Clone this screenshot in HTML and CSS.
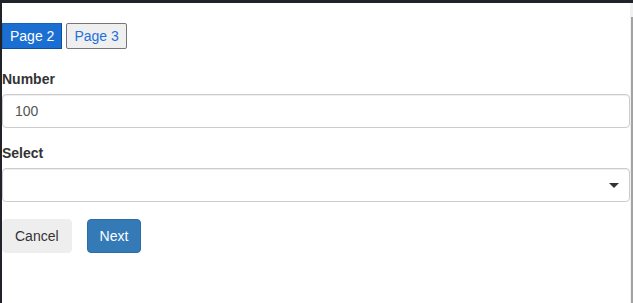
FILE: index.html
```html
<!DOCTYPE html>
<html>
<head>
<meta charset="utf-8">
<link rel="stylesheet" href="styles.css">
</head>
<body>
<div class="frame">
  <div class="page">
    <div class="tabs">
      <button class="tab tab-active">Page 2</button>
      <button class="tab">Page 3</button>
    </div>
    <div class="form-group">
      <label class="label">Number</label>
      <div class="control">100</div>
    </div>
    <div class="form-group">
      <label class="label">Select</label>
      <div class="control select"><span class="caret"></span></div>
    </div>
    <div class="actions">
      <button class="btn btn-default">Cancel</button>
      <button class="btn btn-primary">Next</button>
    </div>
  </div>
  <div class="scrollbar"><div class="thumb"></div></div>
</div>
</body>
</html>
```
FILE: styles.css
```css
html, body {
  margin: 0;
  padding: 0;
  background: #ffffff;
}
body {
  width: 633px;
  height: 303px;
  overflow: hidden;
  font-family: "Liberation Sans", Arial, sans-serif;
  font-size: 14px;
  color: #333333;
}
.frame {
  position: relative;
  height: 300px;
  border-top: 3px solid #202328;
  border-left: 2px solid #202328;
}
.page {
  padding: 20px 3px 0 0;
}
.tabs {
  display: flex;
  gap: 4px;
  margin-bottom: 20px;
}
.tab {
  font-family: "Liberation Sans", Arial, sans-serif;
  font-size: 14px;
  line-height: 16px;
  height: 26px;
  padding: 4px 7px;
  white-space: nowrap;
  background: #efefef;
  color: #1f6fdc;
  border: 1px solid #767676;
  border-radius: 2px;
  margin: 0;
}
.tab-active {
  background: #1b6fd3;
  color: #ffffff;
  border-color: #1a62b8 #0c4f9e #0c4f9e #1a62b8;
  border-radius: 0;
}
.form-group {
  margin-bottom: 15px;
}
.label {
  display: block;
  font-weight: 700;
  line-height: 20px;
  margin-bottom: 5px;
}
.control {
  height: 34px;
  box-sizing: border-box;
  padding: 6px 12px;
  line-height: 20px;
  color: #555555;
  border: 1px solid #cccccc;
  border-radius: 4px;
  box-shadow: inset 0 1px 1px rgba(0,0,0,.075);
  background: #ffffff;
}
.select {
  display: flex;
  justify-content: flex-end;
  align-items: center;
  padding-right: 10px;
}
.caret {
  width: 0;
  height: 0;
  border-left: 5px solid transparent;
  border-right: 5px solid transparent;
  border-top: 5px solid #333333;
}
.actions {
  display: flex;
  gap: 15px;
  padding-top: 2px;
}
.btn {
  font-family: "Liberation Sans", Arial, sans-serif;
  font-size: 14px;
  line-height: 20px;
  padding: 6px 12px;
  border: 1px solid transparent;
  border-radius: 4px;
  margin: 0;
}
.btn-default {
  background: #eeeeee;
  border-color: #eeeeee;
  color: #333333;
}
.btn-primary {
  background: #337ab7;
  border-color: #2e6da4;
  color: #ffffff;
}
.scrollbar {
  position: absolute;
  top: 0;
  right: 0;
  width: 3px;
  height: 300px;
  background: #f1f1f1;
}
.thumb {
  margin-top: 14px;
  margin-left: 1px;
  width: 2px;
  height: 286px;
  background: #a3a3a3;
}
```
